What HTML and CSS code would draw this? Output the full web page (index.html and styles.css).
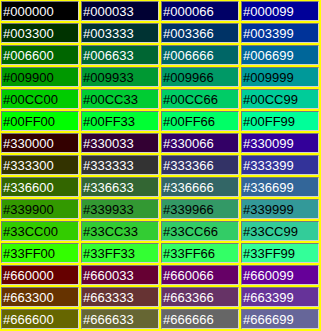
FILE: index.html
```html
<!DOCTYPE html>
<html>
<head>
<meta charset="utf-8">
<link rel="stylesheet" href="styles.css">
</head>
<body>
<table class="swatches">
<tr><td class="lt" style="background:#000000">#000000</td><td class="lt" style="background:#000033">#000033</td><td class="lt" style="background:#000066">#000066</td><td class="lt" style="background:#000099">#000099</td></tr>
<tr><td class="lt" style="background:#003300">#003300</td><td class="lt" style="background:#003333">#003333</td><td class="lt" style="background:#003366">#003366</td><td class="lt" style="background:#003399">#003399</td></tr>
<tr><td class="lt" style="background:#006600">#006600</td><td class="lt" style="background:#006633">#006633</td><td class="lt" style="background:#006666">#006666</td><td class="lt" style="background:#006699">#006699</td></tr>
<tr><td class="dk" style="background:#009900">#009900</td><td class="dk" style="background:#009933">#009933</td><td class="dk" style="background:#009966">#009966</td><td class="dk" style="background:#009999">#009999</td></tr>
<tr><td class="dk" style="background:#00CC00">#00CC00</td><td class="dk" style="background:#00CC33">#00CC33</td><td class="dk" style="background:#00CC66">#00CC66</td><td class="dk" style="background:#00CC99">#00CC99</td></tr>
<tr><td class="dk" style="background:#00FF00">#00FF00</td><td class="dk" style="background:#00FF33">#00FF33</td><td class="dk" style="background:#00FF66">#00FF66</td><td class="dk" style="background:#00FF99">#00FF99</td></tr>
<tr><td class="lt" style="background:#330000">#330000</td><td class="lt" style="background:#330033">#330033</td><td class="lt" style="background:#330066">#330066</td><td class="lt" style="background:#330099">#330099</td></tr>
<tr><td class="lt" style="background:#333300">#333300</td><td class="lt" style="background:#333333">#333333</td><td class="lt" style="background:#333366">#333366</td><td class="lt" style="background:#333399">#333399</td></tr>
<tr><td class="lt" style="background:#336600">#336600</td><td class="lt" style="background:#336633">#336633</td><td class="lt" style="background:#336666">#336666</td><td class="lt" style="background:#336699">#336699</td></tr>
<tr><td class="dk" style="background:#339900">#339900</td><td class="dk" style="background:#339933">#339933</td><td class="dk" style="background:#339966">#339966</td><td class="dk" style="background:#339999">#339999</td></tr>
<tr><td class="dk" style="background:#33CC00">#33CC00</td><td class="dk" style="background:#33CC33">#33CC33</td><td class="dk" style="background:#33CC66">#33CC66</td><td class="dk" style="background:#33CC99">#33CC99</td></tr>
<tr><td class="dk" style="background:#33FF00">#33FF00</td><td class="dk" style="background:#33FF33">#33FF33</td><td class="dk" style="background:#33FF66">#33FF66</td><td class="dk" style="background:#33FF99">#33FF99</td></tr>
<tr><td class="lt" style="background:#660000">#660000</td><td class="lt" style="background:#660033">#660033</td><td class="lt" style="background:#660066">#660066</td><td class="lt" style="background:#660099">#660099</td></tr>
<tr><td class="lt" style="background:#663300">#663300</td><td class="lt" style="background:#663333">#663333</td><td class="lt" style="background:#663366">#663366</td><td class="lt" style="background:#663399">#663399</td></tr>
<tr><td class="lt" style="background:#666600">#666600</td><td class="lt" style="background:#666633">#666633</td><td class="lt" style="background:#666666">#666666</td><td class="lt" style="background:#666699">#666699</td></tr>
</table>
</body>
</html>
```
FILE: styles.css
```css
html, body {
  margin: 0;
  padding: 0;
  background: #ffff00;
}
body {
  font-family: "Liberation Sans", Arial, sans-serif;
  font-size: 13px;
  overflow: hidden;
}
.swatches {
  border-collapse: separate;
  border-spacing: 2px;
  margin: -1px 0 0 -1px;
  table-layout: fixed;
}
.swatches td {
  box-sizing: border-box;
  width: 78px;
  height: 20px;
  padding: 1px 0 0 1px;
  line-height: 17px;
  vertical-align: middle;
  white-space: nowrap;
  border-style: solid;
  border-width: 1px;
  border-color: #7a7a7a #d0d0d0 #d0d0d0 #7a7a7a;
}
.lt { color: #ffffff; }
.dk { color: #000000; }
```
